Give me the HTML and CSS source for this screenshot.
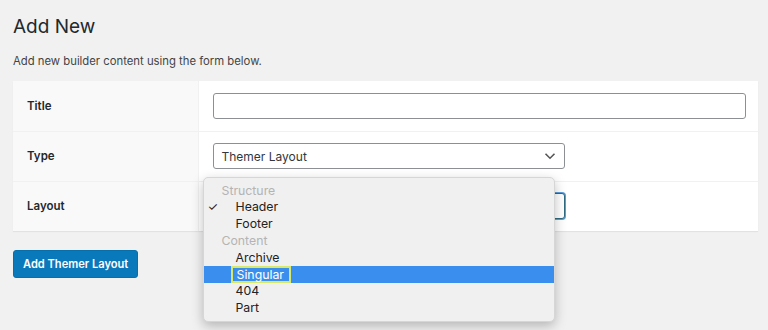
FILE: index.html
```html
<html>
  <head>
    <title>Add New</title>
    <meta name="viewport" content="width=device-width, initial-scale=1.0">
    <link rel="stylesheet" href="styles.css">
  </head>
  <body>
    <div class="wrap">
      <h1 class="page-title">Add New</h1>
      <p class="intro">Add new builder content using the form below.</p>

      <table class="form-table">
        <tr>
          <th>Title</th>
          <td><div class="field field-title"></div></td>
        </tr>
        <tr>
          <th>Type</th>
          <td>
            <div class="field field-select">
              <span>Themer Layout</span>
              <svg class="chevron" width="12" height="8" viewBox="0 0 12 8"><path d="M1.5 1.8 6 6.2l4.5-4.4" fill="none" stroke="#555" stroke-width="1.6"/></svg>
            </div>
          </td>
        </tr>
        <tr>
          <th>Layout</th>
          <td class="layout-cell">
            <div class="field field-select focused"></div>

            <!-- native select popup, open -->
            <div class="popup">
              <div class="group">Structure</div>
              <div class="option"><span class="check">&#10003;</span>Header</div>
              <div class="option">Footer</div>
              <div class="group">Content</div>
              <div class="option">Archive</div>
              <div class="option selected"><span class="outline">Singular</span></div>
              <div class="option">404</div>
              <div class="option">Part</div>
            </div>
          </td>
        </tr>
      </table>

      <button class="button-primary">Add Themer Layout</button>
    </div>
  </body>
</html>
```

FILE: styles.css
```css
body {
  margin: 0;
  background-color: #f1f1f1;
  color: #23282d;
  font-family: Inter, "Noto Sans", sans-serif;
}

.wrap {
  padding: 0 10px 0 13px;
}

.page-title {
  margin: 0;
  padding-top: 14px;
  font-size: 19px;
  font-weight: 400;
  line-height: 26px;
  color: #23282d;
}

.intro {
  margin: 13px 0 0;
  font-size: 11.3px;
  line-height: 16px;
  color: #444;
}

.form-table {
  margin-top: 12px;
  width: 745px;
  border-collapse: collapse;
  background-color: #fff;
  box-shadow: 0 1px 1px rgba(0, 0, 0, 0.06);
}

.form-table tr {
  height: 50px;
  border-bottom: 1px solid #f1f1f1;
}

.form-table tr:last-child {
  border-bottom: none;
}

.form-table th {
  width: 185px;
  padding: 0 0 0 14px;
  text-align: left;
  font-size: 11.5px;
  font-weight: 600;
  background-color: #f9f9f9;
  border-right: 1px solid #f1f1f1;
  box-sizing: border-box;
  color: #23282d;
}

.form-table td {
  padding: 0 12px 0 14px;
}

.field {
  height: 26px;
  box-sizing: border-box;
  border: 1px solid #8c8f94;
  border-radius: 3px;
  background-color: #fff;
}

.field-title {
  width: 533px;
}

.field-select {
  width: 352px;
  display: flex;
  align-items: center;
  justify-content: space-between;
  padding: 0 8px 0 8px;
  font-size: 12px;
  color: #32373c;
}

.field-select.focused {
  border-color: #2e6a80;
  box-shadow: 0 0 0 1px #5b9dd9;
}

.layout-cell {
  position: relative;
}

.popup {
  position: absolute;
  left: 4px;
  top: -5px;
  width: 352px;
  box-sizing: border-box;
  padding: 5px 0 4px;
  background-color: #f0f0f0;
  border: 1px solid #d6d6d6;
  border-radius: 5px;
  box-shadow: 0 4px 12px rgba(0, 0, 0, 0.25);
  font-size: 12.3px;
  line-height: 16.8px;
  color: #222;
}

.group {
  padding-left: 18px;
  color: #b4b4b4;
}

.option {
  position: relative;
  padding-left: 32px;
}

.check {
  position: absolute;
  left: 4px;
  font-size: 12px;
}

.option.selected {
  background-color: #3a8eed;
  color: #fff;
}

.outline {
  margin-left: -5px;
  padding: 0 5px 0 4px;
  border: 2px solid #d8e86a;
  line-height: 13px;
  display: inline-block;
}

.button-primary {
  margin-top: 19px;
  height: 28px;
  padding: 0 9px;
  border: 1px solid #0670ad;
  border-radius: 3px;
  background-color: #0a79bb;
  color: #fff;
  font-family: Inter, "Noto Sans", sans-serif;
  font-size: 11.1px;
  font-weight: 600;
  cursor: pointer;
}
```
